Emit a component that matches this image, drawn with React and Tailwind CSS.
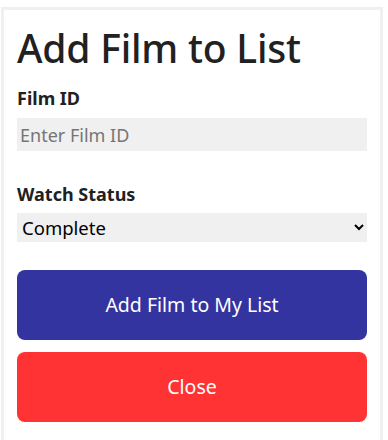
import React from "react";

export default function App() {
  return (
    <div className="pt-[7px] pl-[1px] bg-white min-h-[440px]" style={{ fontFamily: '"Noto Sans", sans-serif' }}>
      <div className="w-[382px] h-[440px] border-[3px] border-b-0 border-[#f0f0f0] px-[13px] text-[#212121]">
        <h1 className="text-[39px] leading-[48px] mt-[14px] font-medium tracking-[-0.2px]">Add Film to List</h1>
        <label className="block text-[18px] font-bold leading-[27px] mt-[13px]">Film ID</label>
        <input
          type="text"
          placeholder="Enter Film ID"
          className="block w-full h-[33px] mt-[6px] bg-[#f0f0f0] border-0 outline-none px-[3px] text-[18px] placeholder:text-[#757575]"
        />
        <label className="block text-[18px] font-bold leading-[27px] mt-[30px]">Watch Status</label>
        <select className="block w-full h-[29px] mt-[5px] bg-[#f0f0f0] border-0 outline-none text-[18.5px] text-black px-[1px]" defaultValue="Complete">
          <option>Complete</option>
          <option>Watching</option>
          <option>Plan to Watch</option>
        </select>
        <button className="block w-full h-[70px] mt-[28px] rounded-[8px] bg-[#3434a1] text-white text-[19.5px]">
          Add Film to My List
        </button>
        <button className="block w-full h-[70px] mt-[12px] rounded-[8px] bg-[#ff3333] text-white text-[19.5px]">
          Close
        </button>
      </div>
    </div>
  );
}
